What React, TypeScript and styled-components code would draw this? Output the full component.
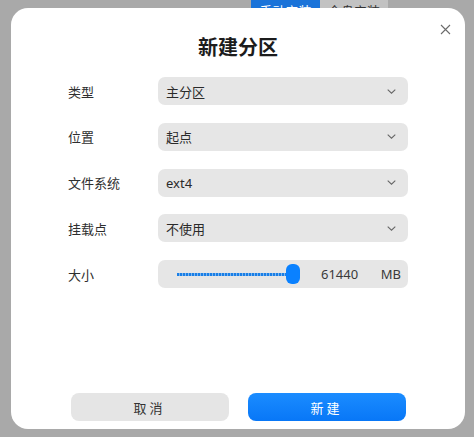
import styled, { createGlobalStyle } from 'styled-components';

const GlobalStyle = createGlobalStyle`
  html, body {
    margin: 0;
    padding: 0;
  }

  body {
    font-family: 'Noto Sans', 'Noto Sans CJK SC', sans-serif;
    background-color: #a9a9a9;
  }
`;

const Backdrop = styled.div`
  position: relative;
  width: 474px;
  height: 437px;
  overflow: hidden;

  background-color: #a9a9a9;
`;

const TabsBar = styled.div`
  display: flex;
  padding-left: 251px;
`;

const Tab = styled.div<{ active?: boolean }>`
  width: ${(props) => (props.active ? '69px' : '68px')};
  height: 20px;

  display: flex;
  align-items: center;
  justify-content: center;

  font-size: 13px;
  color: ${(props) => (props.active ? '#ffffff' : '#333333')};
  background-color: ${(props) => (props.active ? '#1a73d9' : '#c2c2c2')};
`;

const Dialog = styled.div`
  position: absolute;
  left: 11px;
  top: 8px;
  width: 454px;
  height: 421px;
  box-sizing: border-box;
  padding: 26px 57px 8px;

  display: flex;
  flex-direction: column;

  border-radius: 17px;
  background-color: #ffffff;
`;

const CloseButton = styled.div`
  position: absolute;
  top: 15px;
  right: 14px;
  width: 12px;
  height: 12px;

  display: flex;
  align-items: center;
  justify-content: center;
`;

const Title = styled.h1`
  margin: 0 0 15px;

  font-size: 20px;
  line-height: 28px;
  font-weight: 700;
  text-align: center;
  color: #1c1c1c;
`;

const Form = styled.div`
  display: flex;
  flex-direction: column;
  gap: 17.75px;
`;

const Row = styled.div`
  display: flex;
  align-items: center;
`;

const Label = styled.span`
  width: 90px;

  font-size: 13px;
  color: #2e2e2e;
`;

const Field = styled.div`
  width: 250px;
  height: 28px;
  box-sizing: border-box;

  display: flex;
  align-items: center;

  border-radius: 7px;
  background-color: #e6e6e6;
  font-size: 13px;
  color: #2a2a2a;
`;

const SelectField = styled(Field)`
  padding: 0 12px 0 8px;
  justify-content: space-between;
`;

const SizeField = styled(Field)`
  padding: 0 7px 0 19px;
`;

const Track = styled.div`
  width: 110px;
  height: 3px;

  background-image: repeating-linear-gradient(
    to right,
    #1a7fe6 0 2px,
    #7fb6ee 2px 3px
  );
`;

const Thumb = styled.div`
  width: 14px;
  height: 20px;
  margin-left: -1px;

  border-radius: 6px;
  background-color: #0a81ff;
`;

const SizeValue = styled.span`
  margin-left: 21px;
  color: #3a3a3a;
`;

const Unit = styled.span`
  margin-left: auto;
  color: #3a3a3a;
`;

const Footer = styled.div`
  margin-top: auto;

  display: flex;
  justify-content: center;
  gap: 19px;
`;

const Button = styled.button<{ primary?: boolean }>`
  width: 158px;
  height: 28px;
  padding: 0;

  border: none;
  border-radius: 8px;
  font-family: inherit;
  font-size: 13px;
  letter-spacing: 3px;
  color: ${(props) => (props.primary ? '#ffffff' : '#333333')};
  background: ${(props) =>
    props.primary ? 'linear-gradient(#1b8cff, #0877f7)' : '#e5e5e5'};
`;

function Chevron() {
  return (
    <svg width="9" height="5" viewBox="0 0 9 5">
      <path d="M0.7 0.7 L4.5 4.2 L8.3 0.7" fill="none" stroke="#666666" strokeWidth="1.1" />
    </svg>
  );
}

function Select({ value }: { value: string }) {
  return (
    <SelectField>
      <span>{value}</span>
      <Chevron />
    </SelectField>
  );
}

export default function App() {
  return (
    <>
      <GlobalStyle />
      <Backdrop>
        <TabsBar>
          <Tab active>手动安装</Tab>
          <Tab>全盘安装</Tab>
        </TabsBar>
        <Dialog>
          <CloseButton>
            <svg width="11" height="11" viewBox="0 0 11 11">
              <path d="M1 1 L10 10 M10 1 L1 10" stroke="#6b6b6b" strokeWidth="1.1" />
            </svg>
          </CloseButton>
          <Title>新建分区</Title>
          <Form>
            <Row>
              <Label>类型</Label>
              <Select value="主分区" />
            </Row>
            <Row>
              <Label>位置</Label>
              <Select value="起点" />
            </Row>
            <Row>
              <Label>文件系统</Label>
              <Select value="ext4" />
            </Row>
            <Row>
              <Label>挂载点</Label>
              <Select value="不使用" />
            </Row>
            <Row>
              <Label>大小</Label>
              <SizeField>
                <Track />
                <Thumb />
                <SizeValue>61440</SizeValue>
                <Unit>MB</Unit>
              </SizeField>
            </Row>
          </Form>
          <Footer>
            <Button>取消</Button>
            <Button primary>新建</Button>
          </Footer>
        </Dialog>
      </Backdrop>
    </>
  );
}
